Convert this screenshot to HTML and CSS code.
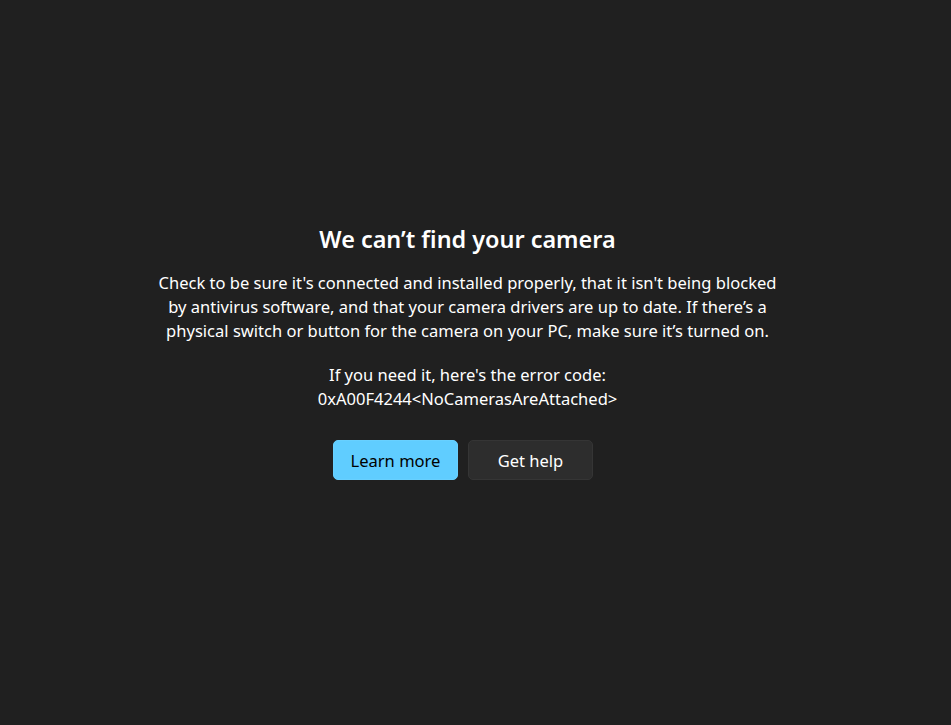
FILE: index.html
```html
<!DOCTYPE html>
<html lang="en">
<head>
<meta charset="utf-8">
<title>Camera</title>
<link rel="stylesheet" href="styles.css">
</head>
<body>
<main class="page">
  <section class="message">
    <h1 class="title">We can’t find your camera</h1>
    <p class="body">Check to be sure it's connected and installed properly, that it isn't being blocked<br>by antivirus software, and that your camera drivers are up to date. If there’s a<br>physical switch or button for the camera on your PC, make sure it’s turned on.</p>
    <p class="body code">If you need it, here's the error code:<br>0xA00F4244&lt;NoCamerasAreAttached&gt;</p>
    <div class="actions">
      <button class="btn btn-primary">Learn more</button>
      <button class="btn btn-secondary">Get help</button>
    </div>
  </section>
</main>
</body>
</html>
```
FILE: styles.css
```css
html, body {
  margin: 0;
  padding: 0;
  background: #202020;
}
body {
  font-family: "Noto Sans", "Open Sans", sans-serif;
  color: #ffffff;
}
.page {
  height: 725px;
  display: flex;
  justify-content: center;
  box-sizing: border-box;
  padding-top: 222px;
  padding-right: 16px;
}
.message {
  display: flex;
  flex-direction: column;
  align-items: center;
  text-align: center;
}
.title {
  margin: 0;
  font-size: 23.4px;
  font-weight: 600;
  line-height: 34px;
}
.body {
  margin: 0;
  font-size: 16.55px;
  line-height: 24px;
}
.body:first-of-type {
  margin-top: 15px;
}
.code {
  margin-top: 20px;
}
.actions {
  display: flex;
  gap: 10px;
  margin-top: 29px;
  margin-right: 9px;
}
.btn {
  width: 125px;
  height: 40px;
  border-radius: 5px;
  font-family: inherit;
  font-size: 16.55px;
  cursor: pointer;
}
.btn-primary {
  background: #60cdff;
  color: #000000;
  border: 1px solid #68d0ff;
}
.btn-secondary {
  background: #2d2d2d;
  color: #ffffff;
  border: 1px solid #353535;
}
```
